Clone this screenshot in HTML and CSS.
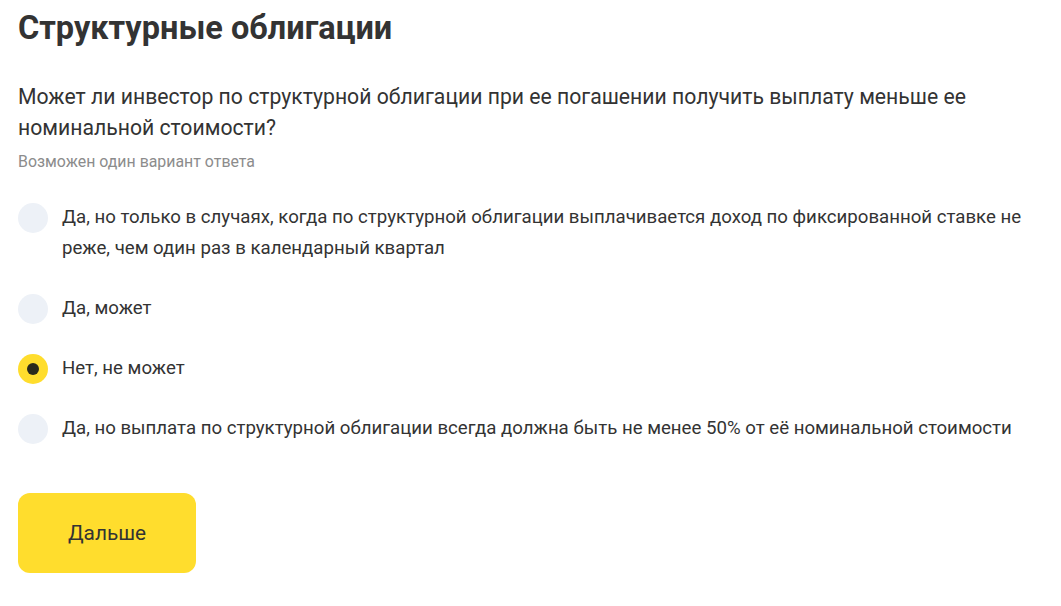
FILE: index.html
```html
<!DOCTYPE html>
<html lang="ru">
<head>
<meta charset="utf-8">
<link rel="stylesheet" href="styles.css">
</head>
<body>
<main class="page">
  <h1 class="title">Структурные облигации</h1>
  <p class="question">Может ли инвестор по структурной облигации при ее погашении получить выплату меньше ее номинальной стоимости?</p>
  <p class="hint">Возможен один вариант ответа</p>
  <div class="options">
    <label class="option"><span class="radio"></span><span class="label">Да, но только в случаях, когда по структурной облигации выплачивается доход по фиксированной ставке не реже, чем один раз в календарный квартал</span></label>
    <label class="option"><span class="radio"></span><span class="label">Да, может</span></label>
    <label class="option"><span class="radio checked"></span><span class="label">Нет, не может</span></label>
    <label class="option"><span class="radio"></span><span class="label">Да, но выплата по структурной облигации всегда должна быть не менее 50% от её номинальной стоимости</span></label>
  </div>
  <button class="next">Дальше</button>
</main>
</body>
</html>
```
FILE: styles.css
```css
html, body { margin: 0; padding: 0; background: #fff; }
body { font-family: Roboto, "Liberation Sans", sans-serif; color: #333333; }
.page { padding: 8px 18px 0 18px; width: 1010px; }
.title { margin: 0; font-size: 32.5px; font-weight: 700; line-height: 40px; color: #333; }
.question { margin: 33px 0 0 0; font-size: 21.2px; line-height: 31px; width: 1000px; }
.hint { margin: 9px 0 0 0; font-size: 15.9px; line-height: 20px; color: #8c8c8c; }
.options { margin-top: 31px; display: flex; flex-direction: column; gap: 30px; }
.option { display: flex; align-items: flex-start; gap: 14px; }
.radio { flex: none; width: 30px; height: 30px; border-radius: 50%; background: #edf1f7; position: relative; }
.radio.checked { background: #ffdd2d; }
.radio.checked::after { content: ""; position: absolute; left: 9px; top: 9px; width: 12px; height: 12px; border-radius: 50%; background: #2a2a1c; }
.label { font-size: 18.65px; line-height: 31px; margin-top: -1px; }
.next { margin-top: 49px; width: 178px; height: 80px; border: none; border-radius: 12px; background: #ffdd2d; font-family: Roboto, "Liberation Sans", sans-serif; font-size: 20.8px; color: #333; cursor: pointer; }
```
